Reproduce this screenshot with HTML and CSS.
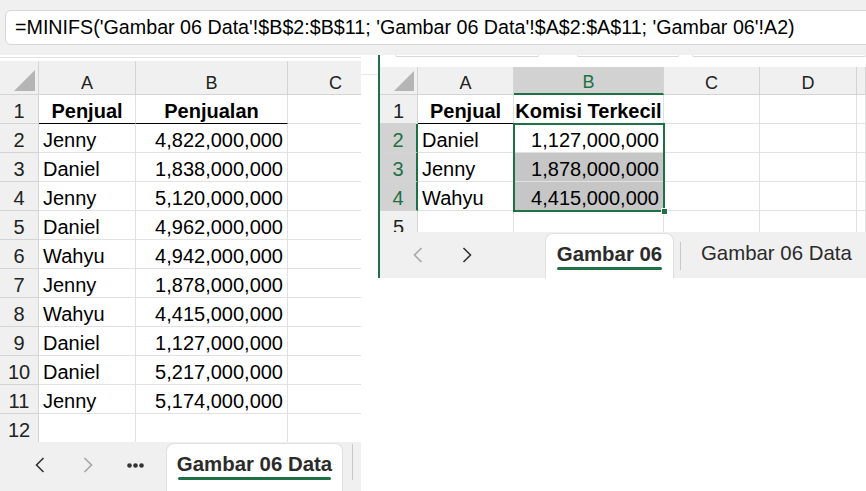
FILE: index.html
```html
<!DOCTYPE html>
<html lang="id">
<head>
    <meta charset="UTF-8">
    <title>MINIFS</title>
    <link rel="stylesheet" href="styles.css">
</head>
<body>
    <div class="formula-bar">
        <div class="formula-box">=MINIFS('Gambar 06 Data'!$B$2:$B$11; 'Gambar 06 Data'!$A$2:$A$11; 'Gambar 06'!A2)</div>
    </div>

    <div class="panes">
        <div class="pane pane-left">
            <div class="sheet-area left-area">
                <div class="grid grid-left">
                    <div class="corner"><span class="tri"></span></div>
                    <div class="col-h">A</div>
                    <div class="col-h">B</div>
                    <div class="col-h">C</div>

                    <div class="row-h">1</div>
                    <div class="cell head bb">Penjual</div>
                    <div class="cell head bb">Penjualan</div>
                    <div class="cell"></div>

                    <div class="row-h">2</div><div class="cell">Jenny</div><div class="cell num">4,822,000,000</div><div class="cell"></div>
                    <div class="row-h">3</div><div class="cell">Daniel</div><div class="cell num">1,838,000,000</div><div class="cell"></div>
                    <div class="row-h">4</div><div class="cell">Jenny</div><div class="cell num">5,120,000,000</div><div class="cell"></div>
                    <div class="row-h">5</div><div class="cell">Daniel</div><div class="cell num">4,962,000,000</div><div class="cell"></div>
                    <div class="row-h">6</div><div class="cell">Wahyu</div><div class="cell num">4,942,000,000</div><div class="cell"></div>
                    <div class="row-h">7</div><div class="cell">Jenny</div><div class="cell num">1,878,000,000</div><div class="cell"></div>
                    <div class="row-h">8</div><div class="cell">Wahyu</div><div class="cell num">4,415,000,000</div><div class="cell"></div>
                    <div class="row-h">9</div><div class="cell">Daniel</div><div class="cell num">1,127,000,000</div><div class="cell"></div>
                    <div class="row-h">10</div><div class="cell">Daniel</div><div class="cell num">5,217,000,000</div><div class="cell"></div>
                    <div class="row-h">11</div><div class="cell">Jenny</div><div class="cell num">5,174,000,000</div><div class="cell"></div>
                    <div class="row-h">12</div><div class="cell"></div><div class="cell"></div><div class="cell"></div>
                </div>
            </div>
            <div class="tabbar tabbar-left">
                <svg class="nav n1" width="10" height="16" viewBox="0 0 10 16"><polyline points="8.5,1 1.5,8 8.5,15" fill="none" stroke="#333" stroke-width="1.6"/></svg>
                <svg class="nav n2" width="10" height="16" viewBox="0 0 10 16"><polyline points="1.5,1 8.5,8 1.5,15" fill="none" stroke="#a6a6a6" stroke-width="1.6"/></svg>
                <svg class="nav dots" width="17" height="16" viewBox="0 0 17 16"><circle cx="2.5" cy="8.5" r="2.3" fill="#333"/><circle cx="8.5" cy="8.5" r="2.3" fill="#333"/><circle cx="14.5" cy="8.5" r="2.3" fill="#333"/></svg>
                <div class="tab active">Gambar 06 Data</div>
                <span class="sep"></span>
            </div>
        </div>

        <div class="gap"><span class="gap-line"></span></div>

        <div class="pane pane-right">
            <div class="ghosts">
                <span class="ghost g1"></span>
                <span class="ghost g2"></span>
                <span class="ghost g3"></span>
            </div>
            <div class="sheet-area right-area">
                <div class="grid grid-right">
                    <div class="corner"><span class="tri"></span></div>
                    <div class="col-h">A</div>
                    <div class="col-h sel">B</div>
                    <div class="col-h">C</div>
                    <div class="col-h">D</div>
                    <div class="col-h"></div>

                    <div class="row-h">1</div>
                    <div class="cell head bb">Penjual</div>
                    <div class="cell head">Komisi Terkecil</div>
                    <div class="cell"></div><div class="cell"></div><div class="cell"></div>

                    <div class="row-h sel">2</div><div class="cell">Daniel</div><div class="cell num">1,127,000,000</div><div class="cell"></div><div class="cell"></div><div class="cell"></div>
                    <div class="row-h sel">3</div><div class="cell">Jenny</div><div class="cell num shade">1,878,000,000</div><div class="cell"></div><div class="cell"></div><div class="cell"></div>
                    <div class="row-h sel">4</div><div class="cell">Wahyu</div><div class="cell num shade">4,415,000,000</div><div class="cell"></div><div class="cell"></div><div class="cell"></div>
                    <div class="row-h">5</div><div class="cell"></div><div class="cell"></div><div class="cell"></div><div class="cell"></div><div class="cell"></div>

                    <div class="selection"><span class="handle"></span></div>
                </div>
            </div>
            <div class="tabbar tabbar-right">
                <svg class="nav n1" width="10" height="16" viewBox="0 0 10 16"><polyline points="8.5,1 1.5,8 8.5,15" fill="none" stroke="#a6a6a6" stroke-width="1.6"/></svg>
                <svg class="nav n2" width="10" height="16" viewBox="0 0 10 16"><polyline points="1.5,1 8.5,8 1.5,15" fill="none" stroke="#333" stroke-width="1.6"/></svg>
                <div class="tab active">Gambar 06</div>
                <span class="sep"></span>
                <div class="tab">Gambar 06 Data</div>
            </div>
        </div>
    </div>
</body>
</html>
```

FILE: styles.css
```css
* {
    box-sizing: border-box;
    margin: 0;
    padding: 0;
}

body {
    width: 866px;
    height: 491px;
    overflow: hidden;
    background: #fff;
    color: #000;
    font-family: 'Liberation Sans', Arial, sans-serif;
}

.formula-bar {
    height: 55px;
    background: #f0f0f0;
    padding: 10px 0 0 5px;
}

.formula-box {
    height: 35px;
    margin-right: -20px;
    background: #fff;
    border: 1px solid #d6d6d6;
    border-radius: 6px;
    padding-left: 9px;
    font-size: 19.7px;
    line-height: 33px;
    white-space: nowrap;
}

.panes {
    display: flex;
    align-items: flex-start;
}

.pane-left {
    width: 361px;
    margin-top: 2px;
    border-top: 1px solid #e2e2e2;
    padding-top: 3px;
}

.gap {
    width: 17px;
    height: 40px;
    padding-top: 19px;
}

.gap-line {
    display: block;
    border-top: 1px solid #e8e8e8;
}

.pane-right {
    flex: 1;
    height: 223px;
    border-left: 2px solid #1e7145;
}

.ghosts {
    display: flex;
    height: 12px;
}

.ghost {
    display: block;
    height: 2px;
    border: 1px solid #d8d8d8;
    border-top: none;
    border-radius: 0 0 4px 4px;
}

.g1 { margin-left: 15px; width: 144px; }
.g2 { margin-left: 38px; width: 102px; }
.g3 { margin-left: 13px; flex: 1; }

.sheet-area {
    overflow: hidden;
}

.left-area { height: 381px; }
.right-area { height: 165px; }

.grid {
    display: grid;
    position: relative;
    grid-auto-rows: 29px;
}

.grid-left {
    width: 384px;
    grid-template-columns: 39px 97px 152px 96px;
    grid-template-rows: 34px;
}

.grid-right {
    grid-template-columns: 38px 96px 150px 96px 97px 1fr;
    grid-template-rows: 28px;
}

.corner {
    position: relative;
    background: #f0f0f0;
    border-right: 1px solid #d4d4d4;
    border-bottom: 1px solid #d4d4d4;
}

.tri {
    position: absolute;
    right: 3px;
    bottom: 3px;
    width: 0;
    height: 0;
    border-left: 21px solid transparent;
    border-bottom: 21px solid #b5b5b5;
}

.grid-right .tri {
    border-left-width: 20px;
    border-bottom-width: 20px;
}

.col-h {
    background: #f0f0f0;
    border-right: 1px solid #d4d4d4;
    border-bottom: 1px solid #d4d4d4;
    color: #222;
    font-size: 18px;
    display: flex;
    align-items: flex-end;
    justify-content: center;
}

.col-h.sel {
    background: #d2d2d2;
    color: #1e7145;
    border-bottom: 2px solid #1e7145;
}

.row-h {
    background: #f0f0f0;
    border-right: 1px solid #d4d4d4;
    border-bottom: 1px solid #d4d4d4;
    color: #222;
    font-size: 20px;
    padding-top: 3px;
    line-height: 26px;
    text-align: center;
}

.row-h.sel {
    background: #d2d2d2;
    color: #1e7145;
    border-right: 2px solid #1e7145;
}

.cell {
    border-right: 1px solid #e1e1e1;
    border-bottom: 1px solid #e1e1e1;
    font-size: 20px;
    padding: 3px 4px 0;
    line-height: 26px;
    white-space: nowrap;
    overflow: hidden;
}

.cell.head {
    font-weight: bold;
    text-align: center;
    padding: 3px 0 0;
}

.cell.bb {
    border-bottom: 1px solid #000;
}

.cell.num {
    text-align: right;
}

.cell.shade {
    background: #c6c6c6;
}

.selection {
    position: absolute;
    left: 133px;
    top: 56px;
    width: 152px;
    height: 89px;
    border: 2px solid #1e7145;
    pointer-events: none;
}

.handle {
    position: absolute;
    right: -5px;
    bottom: -5px;
    width: 7px;
    height: 7px;
    background: #1e7145;
    border: 1px solid #fff;
}

.tabbar {
    display: flex;
    align-items: flex-start;
    overflow: hidden;
    background: #f0f0f0;
    color: #2b2b2b;
}

.tabbar-left {
    height: 49px;
}

.tabbar-right {
    height: 46px;
}

.nav {
    display: block;
    flex: none;
    margin-top: 15px;
}

.tabbar-left .n1 { margin-left: 35px; }
.tabbar-left .n2 { margin-left: 38px; }
.tabbar-left .dots { margin-left: 34px; }

.tabbar-right .n1 { margin-left: 33px; }
.tabbar-right .n2 { margin-left: 39px; }

.tab {
    flex: none;
    font-size: 20.4px;
    line-height: 24px;
    white-space: nowrap;
    padding: 9px 0 0 20px;
}

.tab.active {
    position: relative;
    margin-top: 1px;
    height: 60px;
    padding: 8px 0 0;
    text-align: center;
    background: #fff;
    border: 1px solid #e0e0e0;
    border-bottom: none;
    border-radius: 8px 8px 0 0;
    font-weight: bold;
}

.tab.active::after {
    content: "";
    position: absolute;
    left: 11px;
    right: 11px;
    top: 33px;
    height: 3px;
    border-radius: 2px;
    background: #1e7145;
}

.tabbar-left .tab.active {
    margin-left: 22px;
    width: 177px;
}

.tabbar-right .tab.active {
    margin-left: 73px;
    width: 129px;
}

.sep {
    flex: none;
    width: 1px;
    height: 28px;
    margin-top: 10px;
    background: #c8c8c8;
}

.tabbar-left .sep {
    margin-left: 9px;
    margin-top: 2px;
    height: 36px;
}

.tabbar-right .sep {
    margin-left: 6px;
}
```
